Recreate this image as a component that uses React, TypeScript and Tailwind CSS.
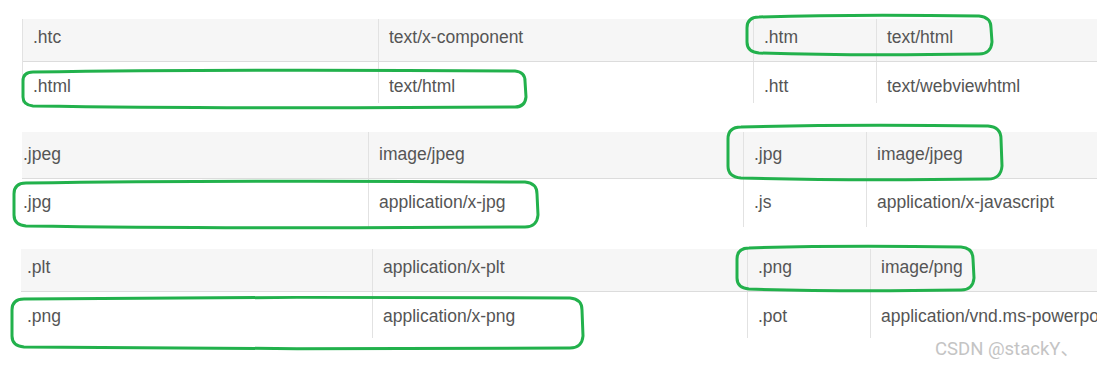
import clsx from "clsx";

type MimeTable = {
  head: string[];
  row: string[];
  wrapClass: string;
  shiftClass: string;
  headClass: string;
  rowClass: string;
  headPad: string;
  rowPad: string;
};

const tables: MimeTable[] = [
  {
    head: [".htc", "text/x-component", ".htm", "text/html"],
    row: [".html", "text/html", ".htt", "text/webviewhtml"],
    wrapClass: "ml-[22px] mt-[19px]",
    shiftClass: "ml-0",
    headClass: "h-[43px]",
    rowClass: "h-[41px]",
    headPad: "pt-[6px]",
    rowPad: "pt-[12px]",
  },
  {
    head: [".jpeg", "image/jpeg", ".jpg", "image/jpeg"],
    row: [".jpg", "application/x-jpg", ".js", "application/x-javascript"],
    wrapClass: "ml-[22px] mt-[29px]",
    shiftClass: "ml-[-10px]",
    headClass: "h-[47px]",
    rowClass: "h-[48px]",
    headPad: "pt-[10px]",
    rowPad: "pt-[11px]",
  },
  {
    head: [".plt", "application/x-plt", ".png", "image/png"],
    row: [".png", "application/x-png", ".pot", "application/vnd.ms-powerpoint"],
    wrapClass: "ml-[21px] mt-[22px]",
    shiftClass: "ml-[-5px]",
    headClass: "h-[43px]",
    rowClass: "h-[46px]",
    headPad: "pt-[6px]",
    rowPad: "pt-[12px]",
  },
];

const colWidths = ["w-[356px]", "w-[375px]", "w-[123px]", "w-[420px]"];

// hand drawn marker boxes, page coordinates
const marks = [
  [747, 16, 991, 54, 12],
  [23, 71, 525, 107, 10],
  [14, 182, 537, 227, 12],
  [728, 126, 1001, 179, 13],
  [12, 298, 582, 348, 12],
  [737, 247, 973, 290, 12],
];

const boxPath = (x1: number, y1: number, x2: number, y2: number, r: number) => {
  const w = x2 - x1;
  return [
    `M ${x1 + r} ${y1 + 1}`,
    `C ${x1 + w * 0.3} ${y1 - 1}, ${x1 + w * 0.7} ${y1 - 1}, ${x2 - r} ${y1}`,
    `Q ${x2} ${y1 + 1} ${x2} ${y1 + r}`,
    `L ${x2 + 1} ${y2 - r}`,
    `Q ${x2} ${y2} ${x2 - r} ${y2}`,
    `C ${x1 + w * 0.7} ${y2 + 1}, ${x1 + w * 0.3} ${y2 + 1}, ${x1 + r} ${y2 - 1}`,
    `Q ${x1} ${y2 - 2} ${x1} ${y2 - r}`,
    `L ${x1} ${y1 + r}`,
    `Q ${x1} ${y1 + 1} ${x1 + r} ${y1 + 1}`,
    "Z",
  ].join(" ");
};

const MimeRow = ({
  cells,
  className,
  pad,
}: {
  cells: string[];
  className: string;
  pad: string;
}) => (
  <div className={clsx("flex", className)}>
    {cells.map((text, i) => (
      <div
        key={i}
        className={clsx(
          "shrink-0 pl-[10px] leading-[24px] whitespace-nowrap border-r border-[#e2e2e2]",
          colWidths[i],
          pad,
        )}
      >
        {text}
      </div>
    ))}
  </div>
);

export default function App() {
  return (
    <div className="relative w-[1097px] h-[367px] overflow-hidden bg-white font-['Liberation_Sans',Arial,sans-serif] text-[17.5px] text-[#555555]">
      <div className="flex flex-col">
        {tables.map((t, i) => (
          <div key={i} className={clsx("overflow-hidden w-[1200px]", t.wrapClass)}>
            <div className={clsx("w-max border-l border-[#e2e2e2]", t.shiftClass)}>
              <MimeRow
                cells={t.head}
                className={clsx("bg-[#f6f6f6] border-b border-[#dcdcdc]", t.headClass)}
                pad={t.headPad}
              />
              <MimeRow cells={t.row} className={t.rowClass} pad={t.rowPad} />
            </div>
          </div>
        ))}
      </div>

      <svg
        className="absolute inset-0 pointer-events-none"
        width={1097}
        height={367}
        viewBox="0 0 1097 367"
      >
        {marks.map(([x1, y1, x2, y2, r], i) => (
          <path
            key={i}
            d={boxPath(x1, y1, x2, y2, r)}
            fill="none"
            stroke="#22b14c"
            strokeWidth={3}
            strokeLinejoin="round"
          />
        ))}
      </svg>

      <div className="absolute left-[935px] top-[337px] text-[18.5px] leading-[24px] text-[#c4c4c4] font-['Roboto','Noto_Sans_CJK_SC',sans-serif]">
        CSDN @stackY、
      </div>
    </div>
  );
}
